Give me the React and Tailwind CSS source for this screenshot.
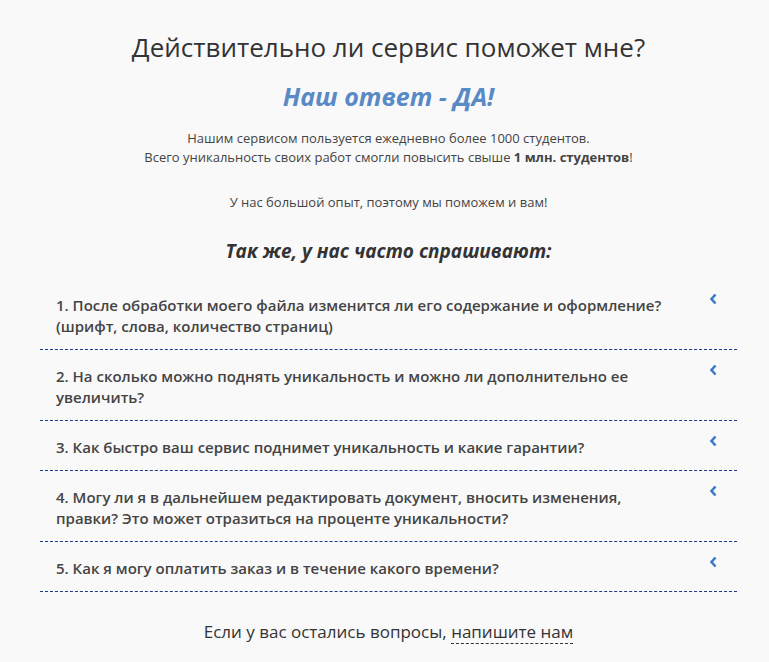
import React from 'react';

const questions = [
  '1. После обработки моего файла изменится ли его содержание и оформление? (шрифт, слова, количество страниц)',
  '2. На сколько можно поднять уникальность и можно ли дополнительно ее увеличить?',
  '3. Как быстро ваш сервис поднимет уникальность и какие гарантии?',
  '4. Могу ли я в дальнейшем редактировать документ, вносить изменения, правки? Это может отразиться на проценте уникальности?',
  '5. Как я могу оплатить заказ и в течение какого времени?',
];

const Chevron = () => (
  <svg viewBox="0 0 9 12" className="mt-[-2px] h-[12px] w-[9px] shrink-0 text-[#3a7bc8]">
    <polyline points="6.5,1.5 2.5,6 6.5,10.5" fill="none" stroke="currentColor" strokeWidth="2.6" />
  </svg>
);

const App = () => {
  return (
    <div className="min-h-[662px] bg-[#f9f9f9] font-['Open_Sans',sans-serif] text-[#333]">
      <div className="ml-[40px] w-[697px] pt-[29px] pb-6 text-center">
        <h1 className="text-[26px] leading-[36px] text-[#333]">Действительно ли сервис поможет мне?</h1>
        <h2 className="mt-[13px] text-[25px] leading-[36px] font-bold italic text-[#5a8ac6]">Наш ответ - ДА!</h2>
        <p className="mt-[15px] text-[13px] leading-[19px] text-[#444]">
          Нашим сервисом пользуется ежедневно более 1000 студентов.
          <br />
          Всего уникальность своих работ смогли повысить свыше <b>1 млн. студентов</b>!
        </p>
        <p className="mt-[26px] text-[13px] leading-[19px] text-[#444]">У нас большой опыт, поэтому мы поможем и вам!</p>
        <h3 className="mt-[25px] text-[19px] leading-[28px] font-bold italic text-[#333]">Так же, у нас часто спрашивают:</h3>

        <div className="mt-[14px] text-left">
          {questions.map((q) => (
            <div
              key={q}
              className="flex items-start justify-between border-b border-dashed border-[#1e3a8a] pl-4 pr-[19px] pt-[16px] pb-[12px]"
            >
              <p className="w-[615px] text-[15px] leading-[21px] font-semibold text-[#444]">{q}</p>
              <Chevron />
            </div>
          ))}
        </div>

        <p className="mt-[28px] text-[17px] leading-[24px] text-[#333]">
          Если у вас остались вопросы,{' '}
          <a href="#" className="border-b border-dashed border-[#333] text-[#333]">напишите нам</a>
        </p>
      </div>
    </div>
  );
};

export default App;
